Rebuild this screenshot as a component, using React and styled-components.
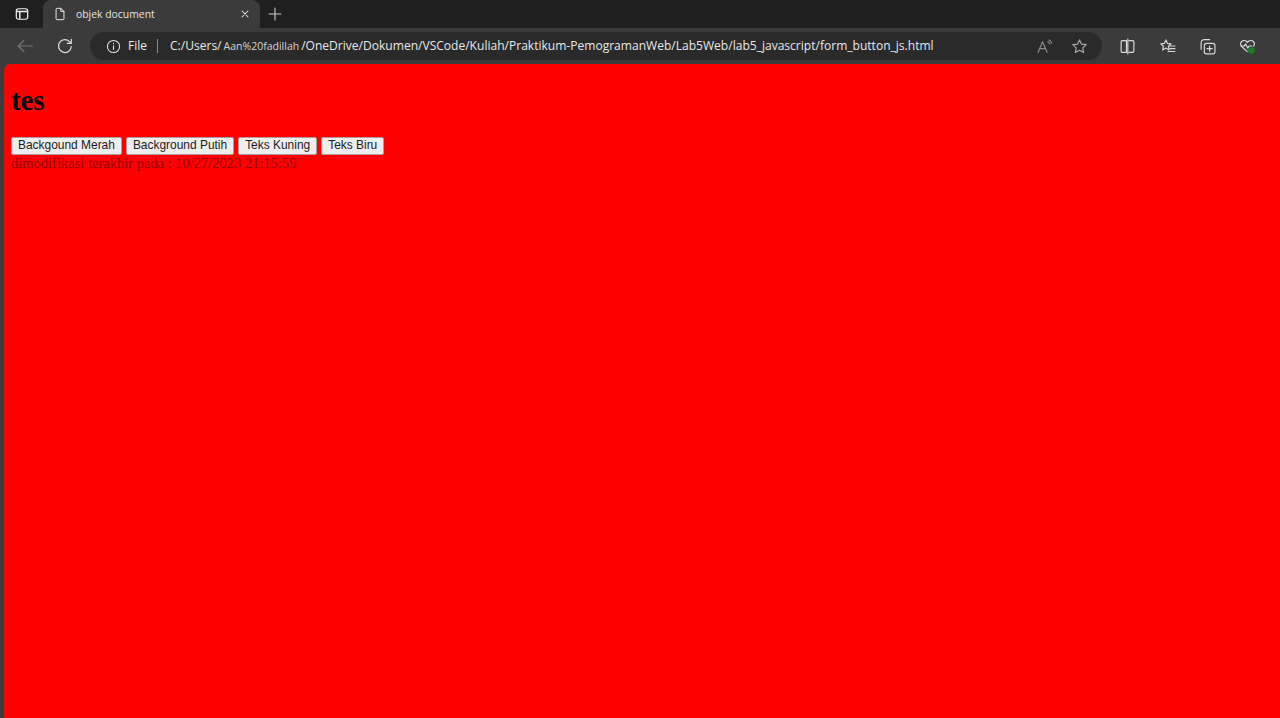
import styled, { createGlobalStyle } from 'styled-components';

const GlobalStyle = createGlobalStyle`
  html, body {
    margin: 0;
    height: 100%;
    overflow: hidden;
    background: #3b3b3b;
  }
`;

const Window = styled.div`
  width: 1280px;
  height: 718px;
  display: flex;
  flex-direction: column;
  font-family: "Segoe UI", "Open Sans", "Noto Sans", sans-serif;
  background: #3b3b3b;
  overflow: hidden;
`;

const TabStrip = styled.div`
  height: 28px;
  flex: none;
  display: flex;
  align-items: stretch;
  background: #1f1f1f;
`;

const TabActions = styled.div`
  width: 43px;
  flex: none;
  display: flex;
  align-items: center;
  padding-left: 15px;
  box-sizing: border-box;
`;

const Tab = styled.div`
  width: 217px;
  flex: none;
  display: flex;
  align-items: center;
  box-sizing: border-box;
  padding: 0 9px 0 10px;
  background: #3b3b3b;
  border-radius: 8px 8px 0 0;
  color: #e4e4e4;
  font-size: 10.4px;
`;

const TabTitle = styled.span`
  flex: 1;
  margin-left: 9px;
`;

const NewTab = styled.div`
  display: flex;
  align-items: center;
  margin-left: 7px;
`;

const Toolbar = styled.div`
  height: 36px;
  flex: none;
  display: flex;
  align-items: center;
  background: #3b3b3b;
`;

const NavButton = styled.div`
  width: ${props => props.$width}px;
  flex: none;
  display: flex;
  justify-content: center;
  align-items: center;
`;

const Omnibox = styled.div`
  width: 1012px;
  height: 28px;
  flex: none;
  margin-left: ${props => props.$offset}px;
  display: flex;
  align-items: center;
  box-sizing: border-box;
  padding: 0 14px 0 16px;
  background: #2a2a2a;
  border-radius: 14px;
`;

const SiteLabel = styled.span`
  margin-left: 7px;
  padding-bottom: 1px;
  color: #ececec;
  font-size: 12px;
`;

const Divider = styled.span`
  width: 1px;
  height: 14px;
  margin: 0 12px 0 10px;
  background: #8a8a8a;
`;

const Url = styled.span`
  flex: 1;
  padding-bottom: 1px;
  color: #e8e8e8;
  font-size: 12.05px;
  white-space: nowrap;
`;

const UrlMuted = styled.span`
  font-size: 10.5px;
  margin: 0 2px;
  color: #d4d4d4;
`;

const OmniIcons = styled.div`
  display: flex;
  align-items: center;
  gap: 18px;
`;

const ToolIcons = styled.div`
  display: flex;
  align-items: center;
  gap: 23px;
  margin-left: 17px;
`;

const Page = styled.div`
  flex: 1;
  margin-left: 3.5px;
  padding: 0 7.5px;
  background: #ff0000;
  border-radius: 6px 0 0 0;
  overflow: hidden;
  font-family: "Liberation Serif", "Times New Roman", serif;
  font-size: 14.5px;
`;

const Heading = styled.h1`
  margin: 20px 0;
  font-size: 28.8px;
  font-weight: bold;
  color: #000;
`;

const Buttons = styled.div`
  display: flex;
  gap: 4px;
`;

const FormButton = styled.button`
  height: 18px;
  padding: 0 6px;
  box-sizing: border-box;
  border: 1px solid #b09a9a;
  border-radius: 2px;
  background: #eeeeee;
  color: #1c1c1c;
  font-family: "Liberation Sans", Arial, sans-serif;
  font-size: 11.95px;
  line-height: 1;
`;

const Modified = styled.div`
  line-height: 17px;
  color: #960000;
`;

const Svg = ({ size = 16, children, color = '#d8d8d8' }) => (
  <svg width={size} height={size} viewBox="0 0 16 16" fill="none" stroke={color} strokeWidth="1.1" strokeLinecap="round" strokeLinejoin="round">
    {children}
  </svg>
);

const App = () => (
  <Window>
    <GlobalStyle />
    <TabStrip>
      <TabActions>
        <Svg size={14} color="#f0f0f0">
          <rect x="1.5" y="2" width="13" height="12" rx="2.5" strokeWidth="1.4" />
          <path d="M2 5.2h12M5.5 5.2V13.5" strokeWidth="1.6" />
        </Svg>
      </TabActions>
      <Tab>
        <Svg size={14} color="#ececec">
          <path d="M3.5 2.5a1 1 0 0 1 1-1h4.5l3.5 3.5v8.5a1 1 0 0 1-1 1h-7a1 1 0 0 1-1-1z" />
          <path d="M9 1.5V5h3.5" />
        </Svg>
        <TabTitle>objek document</TabTitle>
        <Svg size={12} color="#e8e8e8">
          <path d="M4 4l8 8M12 4l-8 8" strokeWidth="1.4" />
        </Svg>
      </Tab>
      <NewTab>
        <Svg size={16} color="#c8c8c8">
          <path d="M8 2v12M2 8h12" />
        </Svg>
      </NewTab>
    </TabStrip>
    <Toolbar>
      <NavButton $width={50}>
        <Svg size={18} color="#777">
          <path d="M14.5 8H2M7 3L2 8l5 5" />
        </Svg>
      </NavButton>
      <NavButton $width={30}>
        <Svg size={18} color="#d8d8d8">
          <path d="M13.6 8.5a5.7 5.7 0 1 1-1.6-4.4L13.6 5.6M13.6 2v3.6H10" />
        </Svg>
      </NavButton>
      <Omnibox $offset={10}>
        <Svg size={15} color="#e0e0e0">
          <circle cx="8" cy="8" r="6.5" />
          <path d="M8 7.3v4M8 4.6v.5" />
        </Svg>
        <SiteLabel>File</SiteLabel>
        <Divider />
        <Url>
          C:/Users/<UrlMuted>Aan%20fadillah</UrlMuted>/OneDrive/Dokumen/VSCode/Kuliah/Praktikum-PemogramanWeb/Lab5Web/lab5_javascript/form_button_js.html
        </Url>
        <OmniIcons>
          <Svg size={17} color="#8c8c8c">
            <path d="M2 13.5L6.2 3.5l4.2 10M3.6 10h5.2M11 3.5a3 3 0 0 1 2 2M12.2 1.8a5 5 0 0 1 2.6 3" />
          </Svg>
          <Svg size={17} color="#a8a8a8">
            <path d="M8 1.8l1.9 4 4.4.5-3.2 3 .8 4.4L8 11.6l-3.9 2.1.8-4.4-3.2-3 4.4-.5z" />
          </Svg>
        </OmniIcons>
      </Omnibox>
      <ToolIcons>
        <Svg size={17}>
          <path d="M7 2.5H3a1 1 0 0 0-1 1v9a1 1 0 0 0 1 1h4zM9.5 2.5H13a1 1 0 0 1 1 1v9a1 1 0 0 1-1 1H9.5M8.3 1v14" />
        </Svg>
        <Svg size={17}>
          <path d="M6.5 1.8l1.5 3.3 3.3.4-2.4 2.3.6 3.4-3-1.7-3 1.7.6-3.4L1.7 5.5 5 5.1zM10.5 7.5h4.5M10.5 10h4.5M8.5 12.7H15" />
        </Svg>
        <Svg size={17}>
          <rect x="5" y="5" width="10" height="10" rx="2" />
          <path d="M2 10.5V4.5a3 3 0 0 1 3-3h5M10 7.5v5M7.5 10h5" />
        </Svg>
        <svg width="17" height="17" viewBox="0 0 16 16" fill="none" stroke="#d8d8d8" strokeWidth="1.1" strokeLinejoin="round">
          <path d="M8 13L2.5 8a3.3 3.3 0 0 1 0-4.7 3.3 3.3 0 0 1 4.7 0l.8.8.8-.8a3.3 3.3 0 0 1 4.7 0 3.3 3.3 0 0 1 0 4.7" />
          <path d="M1.5 7.5h3.5l1.2-2 2 4 1.2-2h3" />
          <circle cx="11.6" cy="11.6" r="3.2" fill="#1e7a2c" stroke="none" />
        </svg>
      </ToolIcons>
    </Toolbar>
    <Page>
      <Heading>tes</Heading>
      <Buttons>
        <FormButton>Backgound Merah</FormButton>
        <FormButton>Background Putih</FormButton>
        <FormButton>Teks Kuning</FormButton>
        <FormButton>Teks Biru</FormButton>
      </Buttons>
      <Modified>dimodifikasi terakhir pada : 10/27/2023 21:15:59</Modified>
    </Page>
  </Window>
);

export default App;
